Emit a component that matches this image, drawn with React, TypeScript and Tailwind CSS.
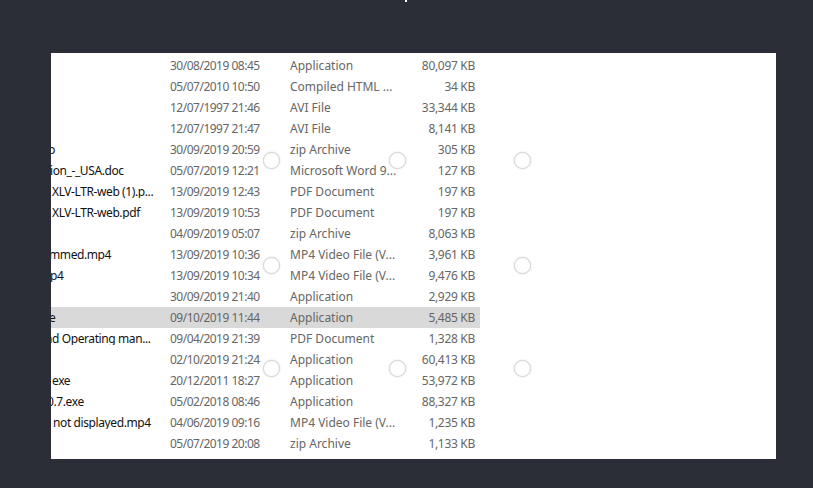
import React from 'react';

interface FileRow {
  name: string;
  nameOffset: string;
  modified: string;
  kind: string;
  size: string;
}

const rows: FileRow[] = [
  { name: '', nameOffset: 'ml-0', modified: '30/08/2019 08:45', kind: 'Application', size: '80,097 KB' },
  { name: '', nameOffset: 'ml-0', modified: '05/07/2010 10:50', kind: 'Compiled HTML ...', size: '34 KB' },
  { name: '', nameOffset: 'ml-0', modified: '12/07/1997 21:46', kind: 'AVI File', size: '33,344 KB' },
  { name: '', nameOffset: 'ml-0', modified: '12/07/1997 21:47', kind: 'AVI File', size: '8,141 KB' },
  { name: 'p', nameOffset: '-ml-[3px]', modified: '30/09/2019 20:59', kind: 'zip Archive', size: '305 KB' },
  { name: 'tion_-_USA.doc', nameOffset: '-ml-[5px]', modified: '05/07/2019 12:21', kind: 'Microsoft Word 9...', size: '127 KB' },
  { name: 'XLV-LTR-web (1).p...', nameOffset: 'ml-[1px]', modified: '13/09/2019 12:43', kind: 'PDF Document', size: '197 KB' },
  { name: 'XLV-LTR-web.pdf', nameOffset: 'ml-[1px]', modified: '13/09/2019 10:53', kind: 'PDF Document', size: '197 KB' },
  { name: '', nameOffset: 'ml-0', modified: '04/09/2019 05:07', kind: 'zip Archive', size: '8,063 KB' },
  { name: 'mmed.mp4', nameOffset: '-ml-[2px]', modified: '13/09/2019 10:36', kind: 'MP4 Video File (V...', size: '3,961 KB' },
  { name: 'p4', nameOffset: '-ml-[1px]', modified: '13/09/2019 10:34', kind: 'MP4 Video File (V...', size: '9,476 KB' },
  { name: '', nameOffset: 'ml-0', modified: '30/09/2019 21:40', kind: 'Application', size: '2,929 KB' },
  { name: 'e', nameOffset: '-ml-[2px]', modified: '09/10/2019 11:44', kind: 'Application', size: '5,485 KB' },
  { name: 'nd Operating man...', nameOffset: '-ml-[6px]', modified: '09/04/2019 21:39', kind: 'PDF Document', size: '1,328 KB' },
  { name: '', nameOffset: 'ml-0', modified: '02/10/2019 21:24', kind: 'Application', size: '60,413 KB' },
  { name: 'exe', nameOffset: 'ml-[1px]', modified: '20/12/2011 18:27', kind: 'Application', size: '53,972 KB' },
  { name: '0.7.exe', nameOffset: '-ml-[4px]', modified: '05/02/2018 08:46', kind: 'Application', size: '88,327 KB' },
  { name: 'not displayed.mp4', nameOffset: 'ml-[2px]', modified: '04/06/2019 09:16', kind: 'MP4 Video File (V...', size: '1,235 KB' },
  { name: '', nameOffset: 'ml-0', modified: '05/07/2019 20:08', kind: 'zip Archive', size: '1,133 KB' },
];

const SELECTED = 12;

// crop handles drawn over the list
const handles = [
  'left-[212px] top-[99px]',
  'left-[338px] top-[99px]',
  'left-[463px] top-[99px]',
  'left-[212px] top-[204px]',
  'left-[463px] top-[204px]',
  'left-[212px] top-[307px]',
  'left-[338px] top-[307px]',
  'left-[463px] top-[307px]',
];

export default function App() {
  return (
    <div
      className="relative w-[813px] h-[488px] bg-[#2b2e36] pt-[53px] pl-[51px] overflow-hidden"
      style={{ fontFamily: '"Noto Sans", "Open Sans", sans-serif' }}
    >
      <div className="absolute top-0 left-[405px] w-[2px] h-[2px] bg-white" />

      <div className="relative w-[725px] h-[406px] bg-white overflow-hidden pt-[2px]">
        {rows.map((row, i) => (
          <div
            key={i}
            className={`flex items-center w-[429px] h-[21px] text-[12px] leading-none ${
              i === SELECTED ? 'bg-[#d9d9d9]' : ''
            }`}
          >
            <div className="w-[119px] overflow-hidden whitespace-nowrap text-[#111111] tracking-[-0.4px]">
              <div className={row.nameOffset}>{row.name}</div>
            </div>
            <div className="w-[120px] whitespace-nowrap text-[#666666] tracking-[-0.5px]">{row.modified}</div>
            <div className="w-[120px] whitespace-nowrap text-[#666666]">{row.kind}</div>
            <div className="w-[65px] whitespace-nowrap text-right text-[#666666] tracking-[-0.3px]">{row.size}</div>
          </div>
        ))}

        {handles.map((pos, i) => (
          <div
            key={i}
            className={`absolute ${pos} w-[17px] h-[17px] rounded-full bg-white border border-[#d4d4d4] shadow-[0_0_2px_rgba(0,0,0,0.15)]`}
          />
        ))}
      </div>
    </div>
  );
}
